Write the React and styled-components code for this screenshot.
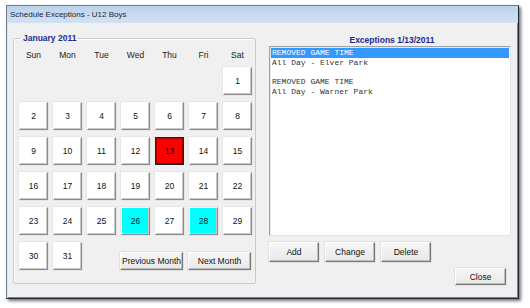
import React from 'react';
import styled, { createGlobalStyle } from 'styled-components';

const GlobalStyle = createGlobalStyle`
  html, body {
    margin: 0;
    padding: 0;
    background: #ffffff;
  }
  body {
    width: 530px;
    height: 308px;
    overflow: hidden;
    font-family: "Liberation Sans", Arial, sans-serif;
  }
`;

const Page = styled.div`
  padding: 5px 0 0 6px;
`;

const Window = styled.div`
  width: 511px;
  height: 292px;
  display: flex;
  flex-direction: column;
  border: 1px solid #6e7d8e;
  border-right-color: #1f2a36;
  border-bottom-color: #1f2a36;
  background: linear-gradient(#bcd3ec, #d9e6f4 22px, #d9e6f4);
  box-shadow: 2px 2px 3px rgba(0, 0, 0, 0.55);
`;

const TitleBar = styled.div`
  height: 17px;
  display: flex;
  align-items: center;
  padding-left: 3px;
  font-size: 8px;
  color: #1c2633;
`;

const Client = styled.div`
  flex: 1;
  display: flex;
  gap: 13px;
  margin: 0 0 0 1px;
  padding: 10px 6px 0 5px;
  background: #f0f0f0;
  border-right: 1px solid #3d95dc;
  border-bottom: 1px solid #3d95dc;
`;

const Group = styled.fieldset`
  margin: 0;
  width: 243px;
  height: 251px;
  box-sizing: border-box;
  padding: 4px 3px 0 5px;
  border: 1px solid #c5cbd0;
  box-shadow: inset 1px 1px 0 #ffffff;
  border-radius: 2px;
`;

const Legend = styled.legend`
  padding: 0 2px;
  margin-left: 2px;
  font-size: 8.5px;
  font-weight: bold;
  color: #1b2a8c;
  line-height: 11px;
`;

const Grid = styled.div`
  display: grid;
  grid-template-columns: repeat(7, 29px);
  grid-template-rows: 12px repeat(6, 28px);
  column-gap: 5px;
  row-gap: 7px;
`;

const DayName = styled.div`
  font-size: 8.5px;
  color: #222;
  text-align: center;
  line-height: 12px;
  margin-top: 1px;
`;

const bg = { normal: '#ffffff', today: '#ff0000', event: '#00ffff' };

const Day = styled.div`
  grid-column: ${p => p.$col};
  box-sizing: border-box;
  display: flex;
  align-items: center;
  justify-content: center;
  font-size: 8.5px;
  color: #111;
  background: ${p => bg[p.$kind]};
  border: 1px solid;
  border-color: ${p => p.$kind === 'today'
    ? '#222 #222 #222 #222'
    : '#ffffff #8c8c8c #8c8c8c #ffffff'};
  box-shadow: ${p => p.$kind === 'today'
    ? 'inset 1px 1px 0 #b00000, inset -1px -1px 0 #900000'
    : 'inset -1px -1px 0 #c8c8c8, 0 0 0 0.5px #dcdcdc'};
`;

const Button = styled.div`
  box-sizing: border-box;
  display: flex;
  align-items: center;
  justify-content: center;
  width: ${p => p.$w || 50}px;
  height: ${p => p.$h || 18}px;
  font-size: 8.5px;
  color: #111;
  background: linear-gradient(#f6f6f6, #e9e9e9);
  border: 1px solid;
  border-color: #ffffff #7a7a7a #7a7a7a #ffffff;
  box-shadow: inset -1px -1px 0 #bdbdbd, 0 0 0 0.5px #d0d0d0;
`;

const MonthButton = styled(Button)`
  grid-column: ${p => p.$col} / span 2;
  align-self: end;
  width: 63px;
  margin-left: -1px;
`;

const Right = styled.div`
  display: flex;
  flex-direction: column;
  width: 244px;
`;

const ListTitle = styled.div`
  text-align: center;
  font-size: 8.5px;
  font-weight: bold;
  color: #1b2a8c;
  line-height: 10px;
  margin-top: 2px;
  padding-left: 4px;
`;

const ListBox = styled.div`
  height: 190px;
  box-sizing: border-box;
  margin-top: 1px;
  padding: 1px;
  background: #ffffff;
  border: 1px solid;
  border-color: #a0a0a0 #e3e3e3 #e3e3e3 #a0a0a0;
  box-shadow: inset 1px 1px 0 #e6e6e6;
`;

const Line = styled.div`
  height: 9.8px;
  line-height: 9.8px;
  padding-left: 1px;
  font-family: "Liberation Mono", "Courier New", monospace;
  font-size: 8px;
  white-space: pre;
  color: ${p => (p.$selected ? '#ffffff' : '#333')};
  background: ${p => (p.$selected ? '#3399ff' : 'transparent')};
`;

const ButtonRow = styled.div`
  display: flex;
  gap: 6px;
  margin-top: 6px;
`;

const CloseRow = styled.div`
  display: flex;
  justify-content: flex-end;
  margin-top: 6px;
  padding-right: 5px;
`;

const days = [];
for (let d = 1; d <= 31; d++) days.push(d);

const kindOf = d => (d === 13 ? 'today' : d === 26 || d === 28 ? 'event' : 'normal');

const lines = [
  { text: 'REMOVED GAME TIME', selected: true },
  { text: 'All Day - Elver Park' },
  { text: '' },
  { text: 'REMOVED GAME TIME' },
  { text: 'All Day - Warner Park' },
];

export default function App() {
  return (
    <>
      <GlobalStyle />
      <Page>
        <Window>
          <TitleBar>Schedule Exceptions - U12 Boys</TitleBar>
          <Client>
            <Group>
              <Legend>January 2011</Legend>
              <Grid>
                {['Sun', 'Mon', 'Tue', 'Wed', 'Thu', 'Fri', 'Sat'].map(n => (
                  <DayName key={n}>{n}</DayName>
                ))}
                {days.map(d => (
                  <Day key={d} $col={((d + 5) % 7) + 1} $kind={kindOf(d)}>
                    {d}
                  </Day>
                ))}
                <MonthButton $col={4} $h={18}>Previous Month</MonthButton>
                <MonthButton $col={6} $h={18}>Next Month</MonthButton>
              </Grid>
            </Group>
            <Right>
              <ListTitle>Exceptions 1/13/2011</ListTitle>
              <ListBox>
                {lines.map((l, i) => (
                  <Line key={i} $selected={l.selected}>{l.text}</Line>
                ))}
              </ListBox>
              <ButtonRow>
                <Button $w={50} $h={20}>Add</Button>
                <Button $w={50} $h={20}>Change</Button>
                <Button $w={50} $h={20}>Delete</Button>
              </ButtonRow>
              <CloseRow>
                <Button $w={51} $h={17}>Close</Button>
              </CloseRow>
            </Right>
          </Client>
        </Window>
      </Page>
    </>
  );
}
